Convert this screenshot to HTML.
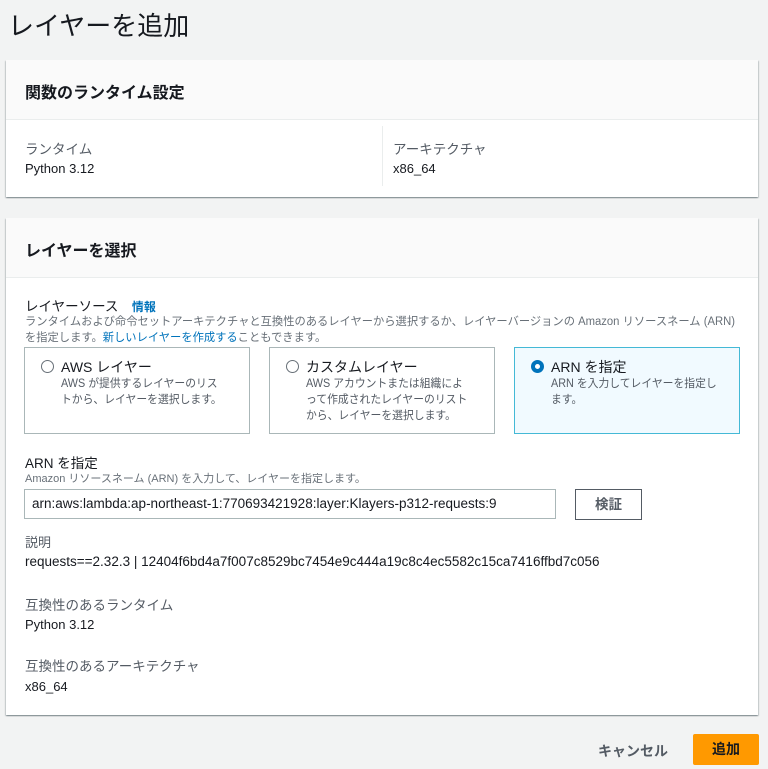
<!DOCTYPE html>
<html><head><meta charset="utf-8"><style>
*{box-sizing:border-box;margin:0;padding:0}
body{width:768px;height:769px;background:#f2f3f3;font-family:"Liberation Sans","Noto Sans CJK JP",sans-serif;color:#16191f;position:relative;overflow:hidden}
.a{position:absolute;white-space:nowrap}
.card{position:absolute;left:6px;width:752px;background:#fff;box-shadow:0 1px 1px rgba(0,28,36,.3),1px 1px 1px rgba(0,28,36,.15),-1px 1px 1px rgba(0,28,36,.15)}
.hd{position:absolute;left:0;top:0;width:100%;height:60px;background:#fafafa;border-bottom:1px solid #eaeded}
.h2{font-size:16px;font-weight:bold;color:#16191f}
.lab{font-size:13.5px;color:#545b64}
.val{font-size:13px;color:#16191f}
.sm{font-size:11.5px;color:#687078}
.tile{position:absolute;top:347px;width:226px;height:87px;border:1px solid #aab7b8;background:#fff}
.tile.sel{border-color:#44b9d6;background:#f1faff}
.rd{position:absolute;left:16px;top:12px;width:13px;height:13px;border:1.5px solid #687078;border-radius:50%;background:#fff}
.sel .rd{border:4px solid #0073bb}
.tt{position:absolute;left:36px;top:9px;font-size:14px;color:#16191f;white-space:nowrap}
.td{position:absolute;left:36px;top:28px;font-size:11.5px;color:#545b64;line-height:16px;white-space:nowrap;transform:scaleX(0.94);transform-origin:left}
</style></head><body>
<div class="a" style="left:8px;top:6px;font-size:26px;color:#16191f">レイヤーを追加</div>

<div class="card" style="top:60px;height:137px">
  <div class="hd"></div>
  <div class="a h2" style="left:19px;top:19px">関数のランタイム設定</div>
  <div class="a lab" style="left:19px;top:78px">ランタイム</div>
  <div class="a val" style="left:19px;top:101px">Python 3.12</div>
  <div style="position:absolute;left:376px;top:66px;width:1px;height:60px;background:#eaeded"></div>
  <div class="a lab" style="left:387px;top:78px">アーキテクチャ</div>
  <div class="a val" style="left:387px;top:101px">x86_64</div>
</div>

<div class="card" style="top:218px;height:497px">
  <div class="hd"></div>
  <div class="a h2" style="left:19px;top:19px">レイヤーを選択</div>
</div>

<div class="a" style="left:25px;top:295px;font-size:13.5px;color:#16191f">レイヤーソース　<span style="color:#0073bb;font-weight:bold;font-size:12px">情報</span></div>
<div class="a sm" style="left:25px;top:313px;transform:scaleX(0.98);transform-origin:left">ランタイムおよび命令セットアーキテクチャと互換性のあるレイヤーから選択するか、レイヤーバージョンの Amazon リソースネーム (ARN)</div>
<div class="a sm" style="left:25px;top:329px;transform:scaleX(0.98);transform-origin:left">を指定します。<span style="color:#0073bb">新しいレイヤーを作成する</span>こともできます。</div>

<div class="tile" style="left:24px"><div class="rd"></div><div class="tt">AWS レイヤー</div><div class="td">AWS が提供するレイヤーのリス<br>トから、レイヤーを選択します。</div></div>
<div class="tile" style="left:269px"><div class="rd"></div><div class="tt">カスタムレイヤー</div><div class="td">AWS アカウントまたは組織によ<br>って作成されたレイヤーのリスト<br>から、レイヤーを選択します。</div></div>
<div class="tile sel" style="left:514px"><div class="rd"></div><div class="tt">ARN を指定</div><div class="td">ARN を入力してレイヤーを指定し<br>ます。</div></div>

<div class="a" style="left:25px;top:452px;font-size:13.5px">ARN を指定</div>
<div class="a sm" style="left:25px;top:470px;font-size:11px">Amazon リソースネーム (ARN) を入力して、レイヤーを指定します。</div>
<div style="position:absolute;left:24px;top:489px;width:532px;height:30px;border:1px solid #aab7b8;background:#fff"></div>
<div class="a" style="left:32px;top:496px;font-size:13.5px">arn:aws:lambda:ap-northeast-1:770693421928:layer:Klayers-p312-requests:9</div>
<div style="position:absolute;left:575px;top:489px;width:67px;height:31px;border:1px solid #545b64;background:#fff;font-size:13.5px;font-weight:bold;color:#545b64;text-align:center;line-height:29px">検証</div>

<div class="a lab" style="left:25px;top:532px;font-size:13px">説明</div>
<div class="a val" style="left:25px;top:554px;font-size:13.5px">requests==2.32.3 | 12404f6bd4a7f007c8529bc7454e9c444a19c8c4ec5582c15ca7416ffbd7c056</div>

<div class="a lab" style="left:25px;top:594px">互換性のあるランタイム</div>
<div class="a val" style="left:25px;top:617px">Python 3.12</div>
<div class="a lab" style="left:25px;top:655px">互換性のあるアーキテクチャ</div>
<div class="a val" style="left:25px;top:679px">x86_64</div>

<div class="a" style="left:598px;top:741px;font-size:14px;font-weight:bold;color:#545b64">キャンセル</div>
<div style="position:absolute;left:693px;top:734px;width:66px;height:31px;background:#ff9900;border-radius:2px;font-size:14px;font-weight:bold;color:#16191f;text-align:center;line-height:31px">追加</div>
</body></html>
